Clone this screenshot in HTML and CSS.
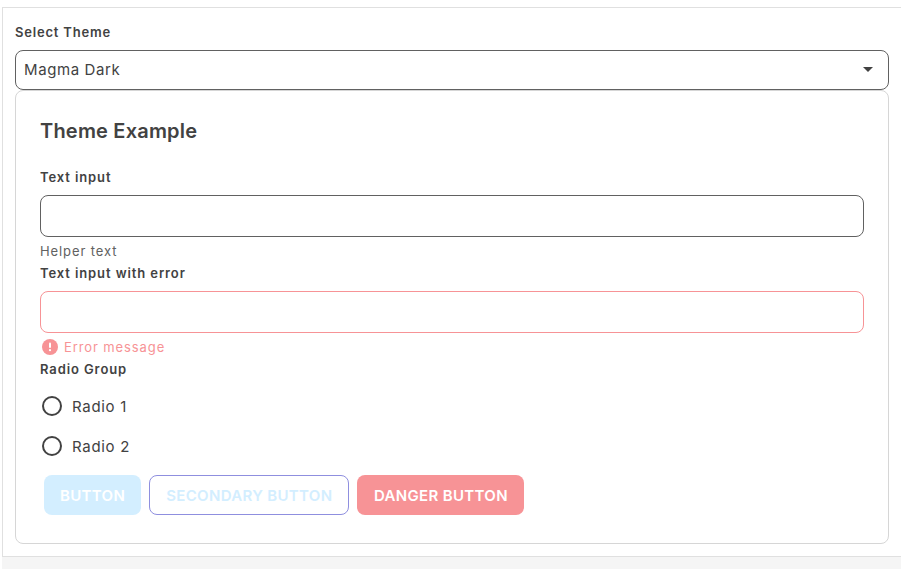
FILE: index.html
```html
<!DOCTYPE html>
<html lang="en">
<head>
  <meta charset="UTF-8">
  <title>Theme Example</title>
  <link rel="stylesheet" href="styles.css">
</head>
<body>
  <div class="preview">
    <div class="label select-label">Select Theme</div>
    <div class="select">
      <span>Magma Dark</span>
      <svg class="caret" width="10" height="5" viewBox="0 0 10 5"><path d="M0 0h10L5 5z" fill="#424242"/></svg>
    </div>

    <div class="card">
      <h2>Theme Example</h2>

      <div class="label">Text input</div>
      <div class="input"></div>
      <div class="helper">Helper text</div>

      <div class="label">Text input with error</div>
      <div class="input input-error"></div>
      <div class="helper error">
        <svg width="16" height="16" viewBox="0 0 16 16">
          <circle cx="8" cy="8" r="8" fill="#f79396"/>
          <rect x="7" y="3.5" width="2" height="5.5" rx="1" fill="#fff"/>
          <circle cx="8" cy="11.2" r="1.1" fill="#fff"/>
        </svg>
        <span>Error message</span>
      </div>

      <div class="label">Radio Group</div>
      <div class="radios">
        <div class="radio"><span class="dot"></span>Radio 1</div>
        <div class="radio"><span class="dot"></span>Radio 2</div>
      </div>

      <div class="buttons">
        <button class="btn primary">Button</button>
        <button class="btn secondary">Secondary Button</button>
        <button class="btn danger">Danger Button</button>
      </div>
    </div>
  </div>
  <div class="footer"></div>
</body>
</html>
```

FILE: styles.css
```css
* {
  box-sizing: border-box;
}

body {
  margin: 0;
  height: 569px;
  overflow: hidden;
  background: #fff;
  color: #424242;
  font-family: Inter, "Liberation Sans", sans-serif;
}

.preview {
  margin: 7px 0 0 2px;
  height: 549px;
  padding: 16px 12px 0 12px;
  border-top: 1px solid #e0e0e0;
  border-left: 1px solid #e0e0e0;
}

.label {
  height: 18px;
  font-size: 13px;
  font-weight: 600;
  line-height: 19px;
  letter-spacing: 0.9px;
  color: #424242;
}

.select-label {
  margin-bottom: 8px;
  line-height: 17px;
  letter-spacing: 0.8px;
}

.select {
  display: flex;
  align-items: center;
  justify-content: space-between;
  height: 40px;
  padding: 0 15px 2px 8px;
  border: 1px solid #616161;
  border-radius: 8px;
  font-size: 15px;
  letter-spacing: 0.6px;
}

.card {
  height: 454px;
  padding: 0 24px;
  border: 1px solid #d6d6d6;
  border-radius: 8px;
}

h2 {
  margin: 0;
  padding-top: 27px;
  height: 77px;
  font-size: 20px;
  font-weight: 600;
  line-height: 26px;
  letter-spacing: 0.2px;
}

.input {
  height: 42px;
  margin-top: 9px;
  border: 1px solid #616161;
  border-radius: 8px;
}

.input-error {
  border-color: #f79396;
}

.helper {
  display: flex;
  align-items: center;
  gap: 6px;
  height: 27px;
  padding-top: 1px;
  font-size: 13px;
  letter-spacing: 0.9px;
  color: #616161;
}

.error {
  padding-left: 2px;
  color: #f79396;
}

.radios {
  padding-top: 8px;
}

.radio {
  display: flex;
  align-items: center;
  gap: 10px;
  height: 40px;
  padding-left: 2px;
  font-size: 15px;
  letter-spacing: 0.7px;
}

.dot {
  width: 20px;
  height: 20px;
  border: 2px solid #424242;
  border-radius: 50%;
}

.buttons {
  display: flex;
  gap: 8px;
  padding: 9px 0 0 4px;
}

.btn {
  height: 40px;
  padding: 0 16px;
  border: 0;
  border-radius: 8px;
  font-family: Inter, "Liberation Sans", sans-serif;
  font-size: 15px;
  font-weight: 600;
  letter-spacing: 0.33px;
  text-transform: uppercase;
  color: #fff;
}

.primary {
  background: #d3eeff;
}

.secondary {
  background: #fff;
  border: 1px solid #8f8fdf;
  color: #d3eeff;
}

.danger {
  background: #f79396;
  padding: 0 16.5px;
}

.footer {
  height: 13px;
  margin-left: 2px;
  background: #f5f5f5;
  border-top: 1px solid #e0e0e0;
}
```
